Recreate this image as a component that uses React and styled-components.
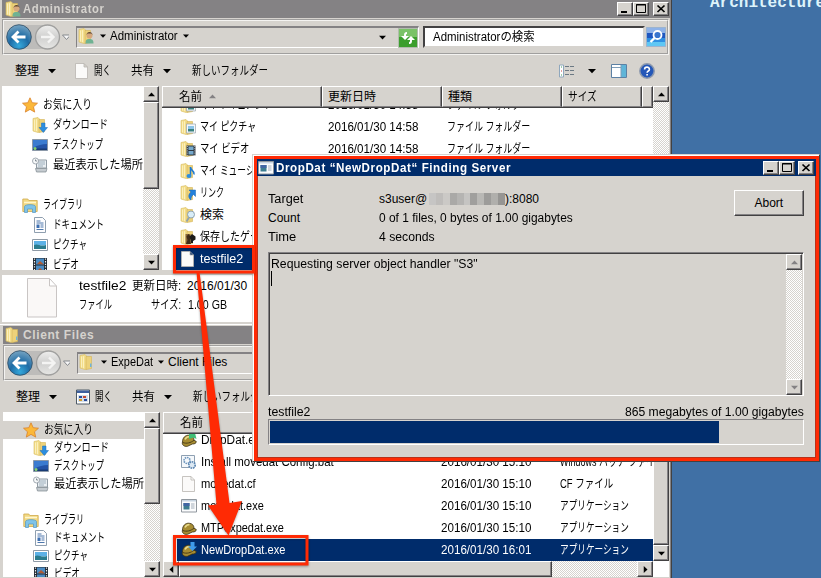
import React, {useLayoutEffect, useRef, useState} from "react";
import styled, {createGlobalStyle, css} from 'styled-components';

const face = '#D6D3CE';
const shade = '#848284';
const dark = '#424142';
const navy = '#002C6B';
const red = '#FF2A04';

const GlobalStyle = createGlobalStyle`
  body {
    margin: 0;
    overflow: hidden;
  }

  * {
    box-sizing: border-box;
  }
`

const hatch = css`
  background: repeating-conic-gradient(#FFFFFF 0% 25%, ${face} 0% 50%) 0 0 / 2px 2px;
`

const raised = css`
  background: ${face};
  border: 1px solid;
  border-color: #FFFFFF ${dark} ${dark} #FFFFFF;
  box-shadow: inset -1px -1px 0 ${shade};
`

const Desktop = styled.div`
  position: relative;
  width: 821px;
  height: 578px;
  overflow: hidden;
  background: #4070A5;
  color: #000000;
  font: 12px/16px 'Liberation Sans', 'Noto Sans CJK JP', sans-serif;
`

const Wallpaper = styled.div`
  position: absolute;
  left: 710px;
  top: -7px;
  color: #DDF3FA;
  font: bold 16px/20px 'Liberation Mono', monospace;
`

const TextBox = styled.span`
  display: block;
  flex: none;
  width: ${p => p.$w}px;
  margin-left: ${p => p.$ml || 0}px;
  white-space: nowrap;
`

const TextRun = styled.span`
  display: inline-block;
  transform-origin: left center;
`

// squeezes a run of text to the advance width of the bitmap UI font
const Text = ({w, ml, children}) => {
    const ref = useRef(null);
    const [scale, setScale] = useState(1);

    useLayoutEffect(() => {
        setScale(w / ref.current.offsetWidth);
    }, [w, children]);

    return (<TextBox $w={w} $ml={ml}>
        <TextRun ref={ref} style={{transform: `scaleX(${scale})`}}>{children}</TextRun>
    </TextBox>)
}

const Svg = styled.svg`
  display: block;
  flex: none;
  margin-left: ${p => p.$ml || 0}px;
  margin-top: ${p => p.$mt || 0}px;
`

const Icon = ({size = 16, ml, mt, children}) => (
    <Svg width={size} height={size} viewBox="0 0 16 16" $ml={ml} $mt={mt}>{children}</Svg>
)

const FolderShape = () => (<React.Fragment>
    <path d="M1 1.500 6 .5 7.500 2v13L6 15.500 1 14z" fill="#F3DD8B" stroke="#D9BC62" strokeWidth=".6"/>
    <path d="M7 2.500h5.500v12L7 15.500z" fill="#EDD27A" stroke="#D3B458" strokeWidth=".6"/>
    <path d="M2.500 2.500v11M4.500 2.200v12" stroke="#FBF0BD"/>
</React.Fragment>)

const icons = {
    folder: <React.Fragment>
        <FolderShape/>
        <path d="M11 9.500h1.500v3.500H11z" fill="#6FB3DC"/>
    </React.Fragment>,
    user: <React.Fragment>
        <FolderShape/>
        <path d="M7.500 15.500c0-4 1.500-4.500 4-4.500s4 .8 4 4.500z" fill="#6FB292"/>
        <circle cx="11.500" cy="7.500" r="3" fill="#D6A87D"/>
        <path d="M8.500 7c0-4 6-4 6 0l-1-1.500h-4z" fill="#5E4630"/>
    </React.Fragment>,
    download: <React.Fragment>
        <FolderShape/>
        <path d="M9.500 6h3.500v4.500h2.500L11.300 15.500 7 10.500h2.500z" fill="#2C8EE0" stroke="#1B6CB8" strokeWidth=".5"/>
    </React.Fragment>,
    picture: <React.Fragment>
        <FolderShape/>
        <path d="M6.500 5h9v9h-9z" fill="#F5F8FA" stroke="#9AA5AE" strokeWidth=".7"/>
        <path d="M8 7h6v3H8z" fill="#8CC4E8"/>
        <path d="M8 10h6v2.500H8z" fill="#39807F"/>
    </React.Fragment>,
    movie: <React.Fragment>
        <FolderShape/>
        <path d="M6.500 4.500h9v10h-9z" fill="#2E3843"/>
        <path d="M8.500 5.500h5v3.500h-5zM8.500 10h5v3.500h-5z" fill="#76A9CC"/>
        <path d="M7.300 5v10M14.800 5v10" stroke="#E8E8E8" strokeWidth=".8" strokeDasharray="1 1.200"/>
    </React.Fragment>,
    music: <React.Fragment>
        <FolderShape/>
        <path d="M10.500 4.500c0 3 4.500 3 3.500 7" fill="none" stroke="#1D79D0" strokeWidth="1.600"/>
        <path d="M10.500 4v8.500" stroke="#1D79D0" strokeWidth="1.500"/>
        <ellipse cx="9" cy="13" rx="2.500" ry="2" fill="#2C8EE0"/>
    </React.Fragment>,
    link: <React.Fragment>
        <FolderShape/>
        <path d="M9 5h6.500v6.500l-2-2c-2 1.500-2.500 3-2.500 5.500-3-2-3-5.500 0-8z" fill="#2380DA" stroke="#1665B0" strokeWidth=".5"/>
    </React.Fragment>,
    search: <React.Fragment>
        <FolderShape/>
        <circle cx="11" cy="7.500" r="3.500" fill="#D8EDF8" stroke="#8FA3B0"/>
        <path d="M9 10.500 6.500 14.500" stroke="#8FA3B0" strokeWidth="1.800"/>
    </React.Fragment>,
    game: <React.Fragment>
        <FolderShape/>
        <path d="M5.500 5h5v10h-5z" fill="#8A6A3C"/>
        <path d="M6 15h5l-1-4 .5-3.500L8.500 5 6.500 7.500l1 3.500z" fill="#3F2C18"/>
        <path d="M10.500 11 9.500 7.500 12 5l3.500 2.500v3L13 12v2h-2z" fill="#1D1B1A"/>
    </React.Fragment>,
    star: <path d="m8 .8 2.200 4.900 5.300.5-4 3.600 1.200 5.300L8 12.400l-4.700 2.700 1.200-5.300-4-3.600 5.300-.5z"
                fill="#FBB83A" stroke="#D9822B" strokeWidth=".8"/>,
    desktop: <React.Fragment>
        <path d="M.5 2.500h15v11H.5z" fill="#2453A6" stroke="#8B98A8"/>
        <path d="M1 3h14v4c-5 0-9 1-14 4z" fill="#3B7BD0"/>
        <path d="M1 11.500h14v1.500H1z" fill="#183A74"/>
        <circle cx="3" cy="11.500" r="1.500" fill="#86D36E"/>
    </React.Fragment>,
    recent: <React.Fragment>
        <path d="M4.500 3h10v8h-10z" fill="#E9EEF2" stroke="#8F9AA3"/>
        <path d="M6 5h7M6 7h7M6 9h5" stroke="#94A7B6" strokeWidth=".9"/>
        <path d="M3.500 11.500H15l-1 3.500H4.500z" fill="#C5CBD0" stroke="#7C868E" strokeWidth=".7"/>
        <circle cx="3.500" cy="4" r="3" fill="#F7F9FA" stroke="#98A2AA" strokeWidth=".9"/>
        <path d="M3.500 2.500V4H5" fill="none" stroke="#66727C" strokeWidth=".8"/>
    </React.Fragment>,
    library: <React.Fragment>
        <path d="M.8 2h5l1 1.500h8.400v11H.8z" fill="#F2D983" stroke="#CFA94B" strokeWidth=".8"/>
        <path d="M2 5.500h12" stroke="#FFF6CD" strokeWidth="1.500"/>
        <path d="M2.500 15.500V9.500c0-2.500 11-2.500 11 0v6h-3V12h-5v3.500z" fill="#7FC3E8" stroke="#5497C0" strokeWidth=".7"/>
    </React.Fragment>,
    document: <React.Fragment>
        <path d="M2.500.5h8l3 3v12h-11z" fill="#FDFDFE" stroke="#8F9FAF"/>
        <path d="M4.500 4h4M4.500 6h7M8.500 8h3M8.500 10h3M4.500 12.500h7" stroke="#4D77AC"/>
        <path d="M4.500 7.500h3v3.500h-3z" fill="#3C6FB2"/>
    </React.Fragment>,
    image: <React.Fragment>
        <path d="M.5 2.500h15v11H.5z" fill="#FFFFFF" stroke="#8E9AA6"/>
        <path d="M2 4h12v4.500H2z" fill="#5CB1E6"/>
        <path d="M2 8c4-2 6 2 12 0v4H2z" fill="#2A7C8E"/>
    </React.Fragment>,
    video: <React.Fragment>
        <path d="M1 1h14v14H1z" fill="#222A33"/>
        <path d="M4 1.500h8v6H4zM4 8.500h8v6.500H4z" fill="#4B8CC4"/>
        <path d="m5 7 3-3 4 3.500zM5 14l3-3 4 3.500z" fill="#B25B32"/>
        <path d="M2.500 1.500v14M13.500 1.500v14" stroke="#F0F0F0" strokeWidth="1.200" strokeDasharray="1.300 1.300"/>
    </React.Fragment>,
    file: <path d="M1.500.5h8.500l3.500 3.500v11.500h-12zM10 .5V4h3.500" fill="#FBFAF9" stroke="#B9B5B0" strokeWidth=".8"/>,
    app: <React.Fragment>
        <path d="M.5 1.500h15v12.500H.5z" fill="#FBFCFD" stroke="#90979E"/>
        <path d="M1 2h14v1.500H1z" fill="#C9D6E2"/>
        <path d="M2.500 5h6v6.500h-6z" fill="#3C7D90"/>
        <path d="M2.500 5h6v3h-6z" fill="#4166A3"/>
        <path d="M10 6h3.500M10 8h3.500M10 10h3.500" stroke="#9AA7B3" strokeWidth=".9"/>
    </React.Fragment>,
    batch: <React.Fragment>
        <path d="M.5 1.500h13v12H.5z" fill="#F5F8FB" stroke="#8EA0B2"/>
        <circle cx="6" cy="6.500" r="3" fill="none" stroke="#6A93BB" strokeWidth="1.700" strokeDasharray="1.500 .8"/>
        <circle cx="11" cy="11" r="3.200" fill="#DDE9F3" stroke="#5D87B2" strokeWidth="1.700" strokeDasharray="1.600 .8"/>
    </React.Fragment>,
    helmet: <React.Fragment>
        <path d="M1.500 10C1.500 5.500 4.500 3 8 3.200c3 .2 5 2 5 5l2.300 1.300c0 2-2 2.500-4 2.500L6.500 14.300C3 15 .5 12.500 1.500 10z" fill="#A78D33" stroke="#3A3013" strokeWidth=".8"/>
        <path d="M4 7.500c.8-2 2.300-3 4.500-3" stroke="#E9DA8A" strokeWidth="1.600" fill="none"/>
        <path d="M1.700 10.500c4 1.500 8 .3 11.300-2.200" stroke="#4B3D17" fill="none"/>
    </React.Fragment>,
    exec: <React.Fragment>
        <path d="M1.500 1h13v14h-13z" fill="#FFFFFF" stroke="#4E5A66"/>
        <path d="M2 1.500h12v2.500H2z" fill="#3D5F9E"/>
        <path d="M3 6h10v7H3z" fill="#D3DEEA"/>
        <path d="M4 7h3v2H4zM9 10h3v2H9z" fill="#284A9B"/>
        <path d="M8 7h3v2H8z" fill="#C14731"/>
        <path d="M4 10h3v2H4z" fill="#D59A2B"/>
    </React.Fragment>,
}
icons.helmetGreen = <React.Fragment>
    {icons.helmet}
    <path d="M8 1h6l1.500 6-3-1.500L8 7z" fill="#3FBE76"/>
</React.Fragment>
icons.helmetBlue = <React.Fragment>
    {icons.helmet}
    <path d="M9.500 0h4v4.500h2.500L11.500 9 7 4.500h2.500z" fill="#3E9BEA"/>
</React.Fragment>

const Caret = ({ml, mt, color = '#000000', dir = 'down', w = 7}) => {
    const turn = {down: 0, left: 90, up: 180, right: 270}[dir];
    return (<Svg width={w} height={w} viewBox="0 0 8 8" $ml={ml} $mt={mt}>
        <path d="M0 2h8L4 6.300z" fill={color} transform={`rotate(${turn} 4 4)`}/>
    </Svg>)
}

/* windows */

const ExplorerFrame = styled.div`
  position: absolute;
  left: 0;
  top: ${p => p.$top}px;
  width: 672px;
  height: ${p => p.$height}px;
  padding: ${p => p.$padTop}px 1px 0 ${p => p.$padLeft}px;
  background: ${face};
  border-right: 1px solid ${dark};
  box-shadow: inset -1px 0 0 ${shade}, inset 0 ${p => p.$padTop ? 1 : 0}px 0 ${face}, inset 0 ${p => p.$padTop ? 2 : 0}px 0 #FFFFFF;
  overflow: hidden;
`

const TitleBar = styled.div`
  display: flex;
  align-items: center;
  height: ${p => p.$active ? 17 : 18}px;
  padding-right: ${p => p.$active ? 2 : 1}px;
  background: ${p => p.$active ? navy : shade};
  color: ${p => p.$active ? '#FFFFFF' : face};
  font-weight: bold;
  letter-spacing: 0.6px;
`

const TitleButtons = styled.div`
  display: flex;
  margin-left: auto;
`

const TitleButton = styled.div`
  ${raised};
  width: 16px;
  height: 14px;
  margin-left: ${p => p.$gap || 0}px;
`

const AddressBand = styled.div`
  display: flex;
  align-items: center;
  height: 36px;
  margin: 1px 1px 0 0;
  padding-right: 1px;
  border: 2px groove #F4F3F1;
`

const AddressField = styled.div`
  display: flex;
  align-items: center;
  width: 343px;
  height: 22px;
  margin-left: 7px;
  padding-bottom: 4px;
  border: 1px solid;
  border-color: ${shade} #FFFFFF #FFFFFF ${shade};
  border-top-width: 2px;
`

const PushRight = styled.div`
  display: flex;
  align-items: center;
  margin-left: auto;
  margin-bottom: -4px;
`

const SearchField = styled.div`
  display: flex;
  align-items: center;
  width: 222px;
  height: 22px;
  margin-left: 4px;
  padding-left: 8px;
  background: #FFFFFF;
  border: 2px solid;
  border-color: ${dark} ${face} ${face} ${dark};
`

const Toolbar = styled.div`
  display: flex;
  align-items: center;
  height: 31px;
  padding-left: 13px;
`

const Body = styled.div`
  display: flex;
  height: ${p => p.$height}px;
`

const NavPane = styled.div`
  flex: none;
  width: ${p => p.$width}px;
  overflow: hidden;
  padding-top: 9px;
  background: #FFFFFF;
`

const NavItem = styled.div`
  display: flex;
  align-items: center;
  height: ${p => p.$pitch}px;
  padding-left: ${p => p.$child ? 30 : 20}px;
  background: ${p => p.$selected ? face : 'none'};
`

const ScrollTrack = styled.div`
  ${hatch};
  display: flex;
  flex: none;
  flex-direction: ${p => p.$horizontal ? 'row' : 'column'};
  justify-content: space-between;
  width: ${p => p.$horizontal ? 'auto' : '16px'};
  height: ${p => p.$horizontal ? '16px' : 'auto'};
`

const ScrollButton = styled.div`
  ${raised};
  display: flex;
  flex: none;
  align-items: center;
  justify-content: center;
  width: 16px;
  height: 16px;
`

const ScrollThumb = styled.div`
  ${raised};
  flex: none;
  width: ${p => p.$width || 16}px;
  height: ${p => p.$height || 16}px;
  margin-bottom: ${p => p.$width ? 0 : 'auto'};
  margin-right: ${p => p.$width ? 'auto' : 0};
`

const FileList = styled.div`
  flex: 1;
  display: flex;
  flex-direction: column;
  min-width: 0;
  margin-left: 3px;
  background: #FFFFFF;
`

const ListHeader = styled.div`
  display: flex;
  flex: none;
  height: 22px;
  background: ${face};
  border-bottom: 1px solid ${dark};
`

const HeaderCell = styled.div`
  display: flex;
  flex: none;
  align-items: center;
  width: ${p => p.$width}px;
  padding-left: ${p => p.$pad || 0}px;
  overflow: hidden;
  border: 1px solid;
  border-color: #FFFFFF ${dark} ${shade} #FFFFFF;
  box-shadow: inset -1px 0 0 ${shade};
`

const Rows = styled.div`
  flex: 1;
  overflow: hidden;
`

const FileRow = styled.div`
  display: flex;
  align-items: center;
  height: 22px;
  margin-top: ${p => p.$shift || 0}px;
  margin-left: 14px;
  padding-left: 4px;
  background: ${p => p.$selected ? navy : 'none'};
  color: ${p => p.$selected ? '#FFFFFF' : '#000000'};
`

const NameCell = styled.div`
  display: flex;
  flex: none;
  align-items: center;
  width: ${p => p.$width}px;
`

const DateCell = styled.div`
  flex: none;
  width: 119px;
`

const Corner = styled.div`
  flex: none;
  width: 16px;
  height: 16px;
  background: #FFFFFF;
`

const SideColumn = styled.div`
  display: flex;
  flex: none;
  flex-direction: column;
  margin-right: 1px;

  > :first-child {
    flex: 1;
  }
`

const Details = styled.div`
  display: flex;
  height: 47px;
  margin: 5px 1px 0 0;
  padding: 3px 0 0 24px;
  background: #FFFFFF;
`

const DetailLines = styled.div`
  margin-left: 20px;
`

const DetailLine = styled.div`
  display: flex;
  height: 19px;
`

const Minimize = () => (<TitleButton><Svg width="14" height="12"><path d="M3 8h6v2H3z"/></Svg></TitleButton>)
const Maximize = () => (<TitleButton>
    <Svg width="14" height="12"><path d="M2.500 1.500h9v8h-9zM2 2h10" fill="none" stroke="#000"/></Svg>
</TitleButton>)
const Close = ({gap}) => (<TitleButton $gap={gap}>
    <Svg width="14" height="12"><path d="m3.500 2.500 7 6.500m0-6.500-7 6.500" stroke="#000" strokeWidth="1.700"/></Svg>
</TitleButton>)

const NavButtons = ({id}) => (<Svg width="65" height="28" viewBox="0 0 65 28">
    <defs>
        <radialGradient id={`${id}b`} cx=".5" cy=".85" r=".8">
            <stop offset="0" stopColor="#35A9DC"/>
            <stop offset=".5" stopColor="#1F6CA5"/>
            <stop offset="1" stopColor="#6D9EBF"/>
        </radialGradient>
        <linearGradient id={`${id}g`} x2="0" y2="1">
            <stop offset="0" stopColor="#EFEFEE"/>
            <stop offset=".5" stopColor="#D0D0CF"/>
            <stop offset="1" stopColor="#E6E6E4"/>
        </linearGradient>
    </defs>
    <path d="M15 2h28a12 12 0 0 1 0 24H15z" fill="#BDBCBA"/>
    <circle cx="15" cy="14" r="12.300" fill={`url(#${id}b)`} stroke="#2C4A62" strokeWidth=".8"/>
    <path d="m14.500 8.500-5.500 5.500 5.500 5.500M9.500 14h12" stroke="#FFFFFF" strokeWidth="2.800" fill="none"/>
    <circle cx="43.500" cy="14" r="12" fill={`url(#${id}g)`} stroke="#A0A09F" strokeWidth="1.300"/>
    <path d="m44 8.500 5.500 5.500-5.500 5.500M49 14H37" stroke="#F4F4F3" strokeWidth="2.400" fill="none"/>
    <path d="M58.500 12h8L62.500 16.500z" fill="#F6F6F6" stroke="#85888D"/>
</Svg>)

const Refresh = () => (<Svg width="20" height="20" viewBox="0 0 20 20" $ml={12}>
    <path d="M.5.5h19v19H.5z" fill="#3C9E2D" stroke="#B1BCAD"/>
    <path d="M1 1h18v8H1z" fill="#7AC267"/>
    <path d="M9 4c-2.500 0-3 1-3 4H3l4 4 4-4H8c0-1.500 0-2 1-2zM11 16c2.500 0 3-1 3-4h3l-4-4-4 4h3c0 1.500 0 2-1 2z" fill="#FFFFFF"/>
</Svg>)

const SearchButton = () => (<Svg width="20" height="20" viewBox="0 0 20 20" $ml={1}>
    <path d="M.5.5h19v19H.5z" fill="#2F8FE2" stroke="#9DB4CE"/>
    <path d="M1 1h18v5H1z" fill="#8EB2E8"/>
    <path d="M1 6h18v5H1z" fill="#1F57C0"/>
    <path d="M1 15h18v4H1z" fill="#5FC7F4"/>
    <circle cx="11.500" cy="8" r="4" fill="#3975CE" stroke="#FFFFFF" strokeWidth="1.800"/>
    <path d="m8.500 11-4 4" stroke="#FFFFFF" strokeWidth="2.400"/>
</Svg>)

const ViewTools = () => (<React.Fragment>
    <Svg width="16" height="14" $ml={291}>
        <path d="M.5 1h4v12h-4z" fill="#FFFFFF" stroke="#8FA7BD"/>
        <path d="M2 2.500h1v1H2zM2 10.500h1v1H2z" fill="#3F9C5C"/>
        <path d="M2 6.500h1v1H2z" fill="#C44"/>
        <path d="M6 2.500h4m1 0h4M6 6.500h4m1 0h4M6 10.500h4m1 0h4" stroke="#6C7984"/>
    </Svg>
    <Caret ml={13} w={8}/>
    <Svg width="16" height="14" $ml={15}>
        <path d="M.5.5h15v13H.5z" fill="#FFFFFF" stroke="#5C81A4"/>
        <path d="M10 1h5v12h-5z" fill="#5FB5D8"/>
        <path d="M1 3.500h9M10 1v12" stroke="#7E9DB8"/>
    </Svg>
    <Svg width="16" height="16" viewBox="0 0 16 16" $ml={12}>
        <circle cx="8" cy="8" r="7.200" fill="#2457B8" stroke="#8E9AAE" strokeWidth="1.500"/>
        <path d="M5.600 6.400c0-3 4.800-3 4.800 0 0 1.600-2.300 1.600-2.300 3.300M8.100 11v1.600" fill="none" stroke="#FFFFFF" strokeWidth="1.600"/>
    </Svg>
</React.Fragment>)

const navItems = [
    {icon: 'star', label: 'お気に入り', w: 49},
    {icon: 'download', label: 'ダウンロード', w: 55, child: true},
    {icon: 'desktop', label: 'デスクトップ', w: 50, child: true},
    {icon: 'recent', label: '最近表示した場所', w: 90, child: true},
    {},
    {icon: 'library', label: 'ライブラリ', w: 40},
    {icon: 'document', label: 'ドキュメント', w: 51, child: true},
    {icon: 'image', label: 'ピクチャ', w: 34, child: true},
    {icon: 'video', label: 'ビデオ', w: 26, child: true},
];

const adminFiles = [
    {icon: 'picture', name: 'マイ ドキュメント', w: 72, date: '2016/01/30 14:58', type: 'ファイル フォルダー', tw: 83},
    {icon: 'picture', name: 'マイ ピクチャ', w: 56, date: '2016/01/30 14:58', type: 'ファイル フォルダー', tw: 83},
    {icon: 'movie', name: 'マイ ビデオ', w: 49, date: '2016/01/30 14:58', type: 'ファイル フォルダー', tw: 83},
    {icon: 'music', name: 'マイ ミュージック', w: 72},
    {icon: 'link', name: 'リンク', w: 24},
    {icon: 'search', name: '検索', w: 24},
    {icon: 'game', name: '保存したゲーム', w: 70},
    {icon: 'file', name: 'testfile2', w: 43, selected: true},
];

const clientFiles = [
    {icon: 'helmetGreen', name: 'DropDat.exe', w: 66},
    {icon: 'batch', name: 'Install movedat Config.bat', w: 133, date: '2016/01/30 15:10', type: 'Windows バッチ ファイル', tw: 104},
    {icon: 'file', name: 'movedat.cf', w: 55, date: '2016/01/30 15:10', type: 'CF ファイル', tw: 53},
    {icon: 'app', name: 'movedat.exe', w: 63, date: '2016/01/30 15:10', type: 'アプリケーション', tw: 69},
    {icon: 'helmet', name: 'MTPexpedat.exe', w: 83, date: '2016/01/30 15:10', type: 'アプリケーション', tw: 69},
    {icon: 'helmetBlue', name: 'NewDropDat.exe', w: 84, date: '2016/01/30 16:01', type: 'アプリケーション', tw: 69, selected: true},
];

const NavList = ({pitch, width, selected}) => (<NavPane $width={width}>
    {navItems.map((item, i) => (
        <NavItem key={i} $pitch={pitch} $child={item.child} $selected={selected && i === 0}>
            {item.icon && <Icon>{icons[item.icon]}</Icon>}
            {item.label && <Text w={item.w} ml={5}>{item.label}</Text>}
        </NavItem>
    ))}
</NavPane>)

const FileRows = ({files, shift, nameWidth}) => (<Rows>
    {files.map((file, i) => (
        <FileRow key={file.name} $shift={i === 0 ? shift : 0} $selected={file.selected}>
            <NameCell $width={nameWidth}>
                <Icon>{icons[file.icon]}</Icon>
                <Text w={file.w} ml={4}>{file.name}</Text>
            </NameCell>
            <DateCell>{file.date && <Text w={90}>{file.date}</Text>}</DateCell>
            {file.type && <Text w={file.tw}>{file.type}</Text>}
        </FileRow>
    ))}
</Rows>)

const VerticalScroll = ({thumb}) => (<ScrollTrack>
    <ScrollButton><Caret dir="up"/></ScrollButton>
    {thumb && <ScrollThumb $height={thumb}/>}
    <ScrollButton><Caret/></ScrollButton>
</ScrollTrack>)

const Tools = ({openIcon, children}) => (<Toolbar>
    <Text w={24}>整理</Text>
    <Caret ml={9} w={8}/>
    <Icon ml={18}>{icons[openIcon]}</Icon>
    <Text w={17} ml={4}>開く</Text>
    <Text w={23} ml={20}>共有</Text>
    <Caret ml={9} w={8}/>
    <Text w={76} ml={21}>新しいフォルダー</Text>
    {children}
</Toolbar>)

const AdministratorWindow = () => (<ExplorerFrame $top={0} $height={323} $padTop={0} $padLeft={2}>
    <TitleBar>
        <Icon ml={3}>{icons.user}</Icon>
        <Text w={81} ml={2}>Administrator</Text>
        <TitleButtons><Minimize/><Maximize/><Close gap={4}/></TitleButtons>
    </TitleBar>
    <AddressBand>
        <NavButtons id="admin"/>
        <AddressField>
            <Icon ml={1}>{icons.user}</Icon>
            <Caret ml={6} w={6}/>
            <Text w={68} ml={4}>Administrator</Text>
            <Caret ml={5} w={6}/>
            <PushRight><Caret/><Refresh/></PushRight>
        </AddressField>
        <SearchField><Text w={102}>Administratorの検索</Text></SearchField>
        <SearchButton/>
    </AddressBand>
    <Tools openIcon="file"><ViewTools/></Tools>
    <Body $height={184}>
        <NavList pitch={20} width={141}/>
        <VerticalScroll thumb={87}/>
        <FileList>
            <ListHeader>
                <HeaderCell $width={160} $pad={16}>
                    <Text w={23}>名前</Text>
                    <Caret dir="up" ml={7} color={shade}/>
                </HeaderCell>
                <HeaderCell $width={120} $pad={5}><Text w={48}>更新日時</Text></HeaderCell>
                <HeaderCell $width={120} $pad={5}><Text w={24}>種類</Text></HeaderCell>
                <HeaderCell $width={80} $pad={5}><Text w={29}>サイズ</Text></HeaderCell>
                <HeaderCell $width={11}/>
            </ListHeader>
            <FileRows files={adminFiles} shift={-14} nameWidth={148}/>
        </FileList>
        <SideColumn><VerticalScroll/></SideColumn>
    </Body>
    <Details>
        <Svg width="32" height="40" viewBox="0 0 32 40">
            <path d="M1.500.5h22l7 7.500v31h-29zM23.500.5V8h7" fill="#FAF8F7" stroke="#C9C5C4"/>
        </Svg>
        <DetailLines>
            <DetailLine>
                <Text w={47} ml={1}>testfile2</Text>
                <Text w={49} ml={6}>更新日時:</Text>
                <Text w={60} ml={6}>2016/01/30</Text>
            </DetailLine>
            <DetailLine>
                <Text w={33} ml={1}>ファイル</Text>
                <Text w={30} ml={39}>サイズ:</Text>
                <Text w={39} ml={7}>1.00 GB</Text>
            </DetailLine>
        </DetailLines>
    </Details>
</ExplorerFrame>)

const ClientWindow = () => (<ExplorerFrame $top={323} $height={255} $padTop={3} $padLeft={3}>
    <TitleBar>
        <Icon ml={2}>{icons.folder}</Icon>
        <Text w={71} ml={2}>Client Files</Text>
    </TitleBar>
    <AddressBand>
        <NavButtons id="client"/>
        <AddressField>
            <Icon ml={1}>{icons.folder}</Icon>
            <Caret ml={6} w={6}/>
            <Text w={42} ml={4}>ExpeDat</Text>
            <Caret ml={5} w={6}/>
            <Text w={59} ml={4}>Client Files</Text>
        </AddressField>
    </AddressBand>
    <Tools openIcon="exec"/>
    <Body $height={165}>
        <NavList pitch={18} width={141} selected/>
        <VerticalScroll thumb={76}/>
        <FileList>
            <ListHeader>
                <HeaderCell $width={273} $pad={16}>
                    <Text w={23}>名前</Text>
                    <Caret dir="up" ml={7} color={shade}/>
                </HeaderCell>
            </ListHeader>
            <FileRows files={clientFiles} shift={-5} nameWidth={260}/>
            <ScrollTrack $horizontal>
                <ScrollButton><Caret dir="left"/></ScrollButton>
                <ScrollThumb $width={373}/>
                <ScrollButton><Caret dir="right"/></ScrollButton>
            </ScrollTrack>
        </FileList>
        <SideColumn>
            <ScrollTrack>
                <ScrollButton><Caret dir="up"/></ScrollButton>
                <ScrollThumb $height={117}/>
                <ScrollButton><Caret/></ScrollButton>
            </ScrollTrack>
            <Corner/>
        </SideColumn>
    </Body>
</ExplorerFrame>)

/* transfer dialog */

const DialogFrame = styled.div`
  position: absolute;
  left: 252px;
  top: 154px;
  width: 568px;
  height: 308px;
  padding: 1px 0 0 1px;
  background: #FFFFFF;
  border: 1px solid;
  border-color: ${face} ${dark} ${dark} ${face};
`

const DialogInner = styled.div`
  height: 305px;
  background: ${face};
  border: 3px solid ${red};
  box-shadow: inset 0 0 0 1px #B8321A;
`

const DialogBody = styled.div`
  padding: 13px 12px 0 11px;
`

const StatusArea = styled.div`
  display: flex;
  justify-content: space-between;
  height: 62px;
`

const StatusGrid = styled.div`
  display: grid;
  grid-template-columns: 111px auto;
  grid-auto-rows: 19px;
`

const StatusValue = styled.div`
  display: flex;
  align-items: center;
`

const Mosaic = styled.div`
  display: flex;
  width: 76px;
  height: 12px;
  margin-left: 2px;
`

const MosaicCell = styled.div`
  flex: 1;
  background: ${p => p.$tone};
`

const AbortButton = styled.div`
  ${raised};
  display: flex;
  align-items: center;
  justify-content: center;
  width: 70px;
  height: 26px;
  margin-top: 1px;
`

const LogBox = styled.div`
  display: flex;
  justify-content: space-between;
  height: 144px;
  margin-top: 1px;
  border: 2px solid;
  border-color: ${shade} #FFFFFF #FFFFFF ${shade};
  border-width: 1px;
  padding: 1px 1px 0 1px;
  box-shadow: inset 1px 0 0 ${dark}, inset 0 1px 0 ${dark};
`

const LogText = styled.div`
  padding: 2px 0 0 1px;
`

const TextCursor = styled.div`
  width: 1px;
  height: 15px;
  margin-top: -1px;
  background: #000000;
`

const FileStatus = styled.div`
  display: flex;
  justify-content: space-between;
  height: 22px;
  padding-top: 8px;
`

const ProgressTrack = styled.div`
  height: 26px;
  margin-top: 1px;
  padding: 1px;
  border: 1px solid;
  border-color: ${shade} #FFFFFF #FFFFFF ${shade};
`

const ProgressFill = styled.div`
  width: 449px;
  height: 22px;
  background: ${navy};
`

const tones = ['#C6C5C4', '#BFBDBB', '#CBC9C6', '#AAA9A7', '#B5B4B2', '#C5C4C2', '#A09F9D', '#B9B8B5', '#9D9C9A', '#B0AFAC', '#969593'];

const TransferDialog = () => (<DialogFrame>
    <DialogInner>
        <TitleBar $active>
            <Icon ml={1}>{icons.app}</Icon>
            <Text w={235} ml={2}>DropDat “NewDropDat“ Finding Server</Text>
            <TitleButtons><Minimize/><Maximize/><Close gap={3}/></TitleButtons>
        </TitleBar>
        <DialogBody>
            <StatusArea>
                <StatusGrid>
                    <StatusValue><Text w={35}>Target</Text></StatusValue>
                    <StatusValue>
                        <Text w={48}>s3user@</Text>
                        <Mosaic>{tones.map((tone, i) => <MosaicCell key={i} $tone={tone}/>)}</Mosaic>
                        <Text w={34}>):8080</Text>
                    </StatusValue>
                    <StatusValue><Text w={32}>Count</Text></StatusValue>
                    <StatusValue><Text w={194}>0 of 1 files, 0 bytes of 1.00 gigabytes</Text></StatusValue>
                    <StatusValue><Text w={28}>Time</Text></StatusValue>
                    <StatusValue><Text w={56}>4 seconds</Text></StatusValue>
                </StatusGrid>
                <AbortButton><Text w={29}>Abort</Text></AbortButton>
            </StatusArea>
            <LogBox>
                <LogText>
                    <Text w={207}>Requesting server object handler "S3"</Text>
                    <TextCursor/>
                </LogText>
                <ScrollTrack>
                    <ScrollButton><Caret dir="up" color={shade}/></ScrollButton>
                    <ScrollButton><Caret color={shade}/></ScrollButton>
                </ScrollTrack>
            </LogBox>
            <FileStatus>
                <Text w={42}>testfile2</Text>
                <Text w={179}>865 megabytes of 1.00 gigabytes</Text>
            </FileStatus>
            <ProgressTrack><ProgressFill/></ProgressTrack>
        </DialogBody>
    </DialogInner>
</DialogFrame>)

/* red callouts drawn over the windows */

const Callouts = styled.svg`
  position: absolute;
  left: 0;
  top: 0;
  filter: drop-shadow(0 1px 1px #00000055);
`

export default function App() {
    return (<React.Fragment>
        <GlobalStyle/>
        <Desktop>
            <Wallpaper>Architecture</Wallpaper>
            <AdministratorWindow/>
            <ClientWindow/>
            <TransferDialog/>
            <Callouts width="821" height="578">
                <path d="M174.500 246.500h79v25.500h-79zM174.500 536.500h132.500v27.500H174.500z" fill="none" stroke={red} strokeWidth="3"/>
                <path d="M196.500 272h3L229.500 503l12.500-2-13.500 34.500L208 505.500l8.500-1z" fill={red}/>
            </Callouts>
        </Desktop>
    </React.Fragment>)
}
